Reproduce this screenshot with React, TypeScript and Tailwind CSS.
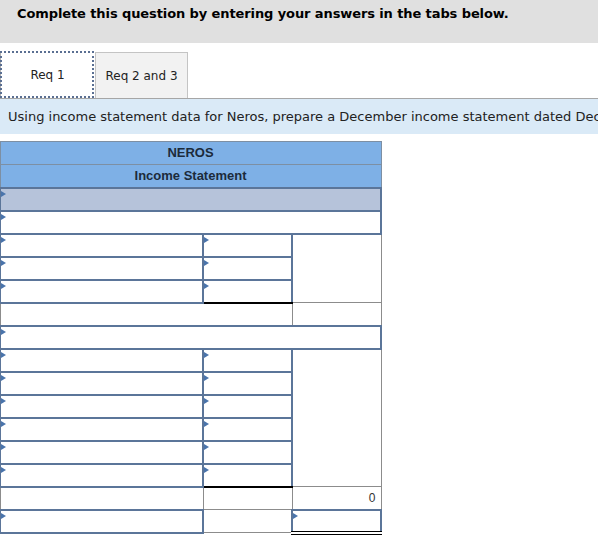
import React from 'react';

const verdana = { fontFamily: '"DejaVu Sans", Verdana, sans-serif' };

function Marker() {
  return (
    <span className="absolute left-0 top-[2px] h-0 w-0 border-y-[3px] border-l-[5px] border-y-transparent border-l-[#4a74ab]" />
  );
}

function InputCell({ colSpan, className = '' }: { colSpan?: number; className?: string }) {
  return (
    <td colSpan={colSpan} className={`relative border-2 border-[#5b7599] p-0 ${className}`}>
      <Marker />
    </td>
  );
}

function PlainCell({ colSpan, rowSpan, children }: { colSpan?: number; rowSpan?: number; children?: React.ReactNode }) {
  return (
    <td colSpan={colSpan} rowSpan={rowSpan} className="border border-[#8c8c8c] p-0 pr-[5px] text-right align-middle text-[12px] text-[#333]">
      {children}
    </td>
  );
}

export default function App() {
  const row = 'h-[23px]';

  return (
    <div className="min-h-screen bg-white">
      {/* Top instruction bar */}
      <div className="flex h-[43px] items-start bg-[#e0e0e0] px-[17px] pt-[4px]" style={verdana}>
        <p className="text-[13px] font-bold tracking-[-0.1px] text-black">
          Complete this question by entering your answers in the tabs below.
        </p>
      </div>

      {/* Tabs */}
      <div className="mt-[8px] flex items-end border-b border-[#a6a6a6]" style={verdana}>
        <div className="flex h-[47px] w-[94px] items-center justify-center border-l border-l-[#b0b0b0] bg-white text-[12px] text-[#222] outline-2 outline-offset-[-2px] outline-dotted outline-[#5a6f92]">
          Req 1
        </div>
        <div className="ml-px flex h-[46px] w-[93px] items-center justify-center border border-b-0 border-[#c4c4c4] bg-[#f2f2f2] text-[12px] text-[#222]">
          Req 2 and 3
        </div>
      </div>

      {/* Prompt band */}
      <div className="flex h-[35px] items-center overflow-hidden whitespace-nowrap bg-[#daeaf7] pl-[8px] text-[13px] text-[#222]" style={verdana}>
        Using income statement data for Neros, prepare a December income statement dated December 31.
      </div>

      {/* Statement table */}
      <div className="mt-[7px] -ml-px" style={{ fontFamily: '"Liberation Sans", Arial, sans-serif' }}>
        <table className="w-[381px] table-fixed border-collapse">
          <colgroup>
            <col className="w-[203px]" />
            <col className="w-[89px]" />
            <col className="w-[89px]" />
          </colgroup>
          <tbody>
            <tr className={row}>
              <th colSpan={3} className="border border-[#7d8fa3] bg-[#7eb0e6] p-0 text-center text-[13px] font-bold text-[#1c2b3b]">
                NEROS
              </th>
            </tr>
            <tr className={row}>
              <th colSpan={3} className="border border-[#7d8fa3] bg-[#7eb0e6] p-0 text-center text-[13px] font-bold text-[#1c2b3b]">
                Income Statement
              </th>
            </tr>
            <tr className={row}>
              <InputCell colSpan={3} className="bg-[#b6c3da]" />
            </tr>
            <tr className={row}>
              <InputCell colSpan={3} />
            </tr>

            <tr className={row}>
              <InputCell />
              <InputCell />
              <PlainCell rowSpan={3} />
            </tr>
            <tr className={row}>
              <InputCell />
              <InputCell />
            </tr>
            <tr className={row}>
              <InputCell />
              <InputCell className="border-b-black" />
            </tr>

            <tr className={row}>
              <PlainCell colSpan={2} />
              <PlainCell />
            </tr>

            <tr className={row}>
              <InputCell colSpan={3} />
            </tr>

            <tr className={row}>
              <InputCell />
              <InputCell />
              <PlainCell rowSpan={6} />
            </tr>
            {[0, 1, 2, 3, 4].map((i) => (
              <tr key={i} className={row}>
                <InputCell />
                <InputCell className={i === 4 ? 'border-b-black' : ''} />
              </tr>
            ))}

            <tr className={row}>
              <PlainCell />
              <PlainCell />
              <PlainCell>0</PlainCell>
            </tr>
            <tr className={row}>
              <InputCell />
              <PlainCell />
              <InputCell className="border-b-[4px] border-double border-b-black" />
            </tr>
          </tbody>
        </table>
      </div>
    </div>
  );
}
